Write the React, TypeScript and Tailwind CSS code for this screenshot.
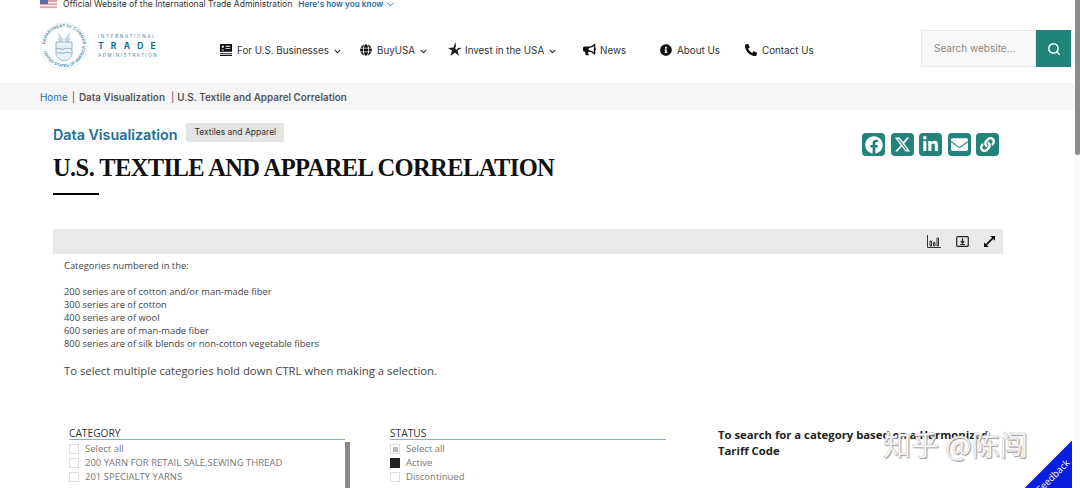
import React from 'react';
import { FaFacebook, FaLinkedinIn, FaEnvelope, FaLink, FaGlobe, FaBullhorn, FaInfoCircle, FaPhoneAlt, FaChevronDown } from 'react-icons/fa';
import { FaXTwitter } from 'react-icons/fa6';
import { Search, ChevronDown } from 'lucide-react';

const sans = 'font-["Inter","Noto_Sans",sans-serif]';
const segoe = 'font-["Open_Sans","Noto_Sans",sans-serif]';

const Flag = () => (
    <svg width="17" height="9" viewBox="0 0 17 9" className="shrink-0">
        <rect width="17" height="9" fill="#e8a0a0" />
        <rect y="2" width="17" height="1.4" fill="#f6f0f0" />
        <rect y="5" width="17" height="1.4" fill="#f6f0f0" />
        <rect y="8" width="17" height="1" fill="#f6f0f0" />
        <rect width="8" height="4" fill="#5a6fa5" />
    </svg>
);

const Seal = () => (
    <svg width="48" height="48" viewBox="0 0 48 48" className="shrink-0">
        <defs>
            <path id="sealTop" d="M5 24a19 19 0 0 1 38 0" />
            <path id="sealBottom" d="M3 24a21 21 0 0 0 42 0" />
        </defs>
        <circle cx="24" cy="24" r="23" fill="none" stroke="#9fc1d6" strokeWidth="0.6" strokeDasharray="1 1" />
        <text fontSize="4.2" fill="#5f8eaa" fontFamily="Liberation Sans" fontWeight="700">
            <textPath href="#sealTop" startOffset="3%">DEPARTMENT OF COMMERCE</textPath>
        </text>
        <text fontSize="4.2" fill="#5f8eaa" fontFamily="Liberation Sans" fontWeight="700">
            <textPath href="#sealBottom" startOffset="8%">UNITED STATES OF AMERICA</textPath>
        </text>
        <path d="M24 18 18 10l1 7-2-2 3 6zM24 18l6-8-1 7 2-2-3 6z" fill="#c5d6e2" />
        <path d="M16 20h16v12c0 4-5 6-8 7-3-1-8-3-8-7z" fill="#e9f1f6" stroke="#7fa6bf" strokeWidth="0.8" />
        <path d="M16 27c3-2 5 1 8 0s5-1 8 0M17 31c3-1 4 1 7 0s4-1 7 0" fill="none" stroke="#7fa6bf" strokeWidth="0.9" />
    </svg>
);

const BizIcon = () => (
    <svg width="12" height="12" viewBox="0 0 13 13" className="shrink-0">
        <path d="M0 0h13v8.5H0z" fill="#111" />
        <path d="M2 2h2v2H2zM6 2h5v1H6zM6 4.5h5v1H6zM2 6h2v1H2z" fill="#fff" />
        <path d="M0 10h13v1H0zM0 12h13v1H0z" fill="#111" />
    </svg>
);

const StarIcon = () => (
    <svg width="14" height="15" viewBox="0 0 14 15" className="shrink-0">
        <path d="M7.5 0 8 5.5l5.5.5-4 2.5L11 14 7 10.5 2.5 14l1.5-5.5L0 6l5.5-.5z" fill="#1a1a1a" />
        <path d="M7 5.5 14 3 8 8z" fill="#fff" />
    </svg>
);

const NavItem = ({ icon, label, caret, className = '' }: { icon: React.ReactNode; label: string; caret?: boolean; className?: string }) => (
    <div className={`flex items-center ${className}`}>
        <span className="w-[17px] -mt-[3px] flex text-[#111]">{icon}</span>
        <span className="text-[9.8px] text-[#333] whitespace-nowrap">{label}</span>
        {caret && <FaChevronDown className="ml-[5px] text-[#222]" size={7} />}
    </div>
);

const ShareBtn = ({ children }: { children: React.ReactNode }) => (
    <div className="w-[23px] h-[23px] rounded-[4px] bg-[#22837a] flex items-center justify-center text-white">{children}</div>
);

const SlicerRow = ({ label, box = 'empty' }: { label: string; box?: 'empty' | 'partial' | 'on' }) => (
    <div className="h-[14px] flex items-center gap-[6px]">
        <span className={`w-[10px] h-[10px] border flex items-center justify-center shrink-0 ${box === 'on' ? 'bg-[#222] border-[#222]' : 'bg-white border-[#ddd]'}`}>
            {box === 'partial' && <span className="w-[5px] h-[5px] bg-[#bbb]" />}
        </span>
        <span className="text-[9.5px] text-[#777] whitespace-nowrap">{label}</span>
    </div>
);

export default function App() {
    return (
        <div className={`relative w-[1080px] h-[488px] overflow-hidden bg-white ${sans}`}>
            {/* gov banner */}
            <div className="h-[9px] pl-[40px] flex items-center gap-[6px]">
                <Flag />
                <span className="text-[8.6px] text-[#333] whitespace-nowrap">Official Website of the International Trade Administration</span>
                <span className="text-[8.2px] font-semibold text-[#1f6f9f] whitespace-nowrap">Here's how you know</span>
                <ChevronDown size={11} className="-ml-[4px] text-[#1f6f9f]" />
            </div>

            {/* header */}
            <div className="h-[74px] pl-[40px] pr-[9px] flex items-center">
                <Seal />
                <div className="ml-[10px] w-[62px] flex flex-col items-start -mt-[1px]">
                    <span className="text-[4.5px] tracking-[1.75px] text-[#4d86a5] leading-[9px] whitespace-nowrap">INTERNATIONAL</span>
                    <span className="text-[8.5px] font-bold tracking-[7.2px] text-[#0f6d94] leading-[11px] whitespace-nowrap">TRADE</span>
                    <span className="text-[4.5px] tracking-[1.55px] text-[#4d86a5] leading-[8px] whitespace-nowrap">ADMINISTRATION</span>
                </div>
                <nav className="ml-[60px] mt-[10px] flex items-center">
                    <NavItem icon={<BizIcon />} label="For U.S. Businesses" caret className="w-[140px]" />
                    <NavItem icon={<FaGlobe size={12} />} label="BuyUSA" caret className="w-[88px]" />
                    <NavItem icon={<StarIcon />} label="Invest in the USA" caret className="w-[135px]" />
                    <NavItem icon={<FaBullhorn size={13} />} label="News" className="w-[77px]" />
                    <NavItem icon={<FaInfoCircle size={12} />} label="About Us" className="w-[85px]" />
                    <NavItem icon={<FaPhoneAlt size={12} />} label="Contact Us" />
                </nav>
                <div className="ml-auto flex h-[37px] mt-[5px]">
                    <div className="w-[115px] border border-[#e8e8e8] bg-[#f7f7f7] flex items-center pl-[12px] text-[10px] text-[#888] whitespace-nowrap">Search website...</div>
                    <div className="w-[35px] bg-[#22837a] flex items-center justify-center text-white"><Search size={14} strokeWidth={2.5} /></div>
                </div>
            </div>

            {/* breadcrumb */}
            <div className="h-[27px] bg-[#f6f6f6] pl-[40px] pt-[1px] flex items-center text-[9.9px] whitespace-nowrap">
                <span className="text-[#1f6f9f]">Home</span>
                <span className="mx-[4px] text-[#555]">|</span>
                <span className="font-semibold text-[#555]">Data Visualization</span>
                <span className="ml-[6px] mr-[3px] text-[#555]">|</span>
                <span className="font-semibold text-[#555]">U.S. Textile and Apparel Correlation</span>
            </div>

            {/* title area */}
            <div className="pl-[53px] pr-[81px] h-[119px] flex justify-between">
                <div className="pt-[13px]">
                    <div className="flex items-start">
                        <span className="mt-[1px] text-[14.3px] font-semibold text-[#1a6f98] leading-[22px] whitespace-nowrap">Data Visualization</span>
                        <span className="ml-[9px] h-[19px] px-[8px] rounded-[2px] bg-[#e4e4e4] text-[8.5px] text-[#333] flex items-center whitespace-nowrap">Textiles and Apparel</span>
                    </div>
                    <h1 className='mt-[6px] font-["Liberation_Serif",serif] font-bold text-[24.5px] tracking-[-0.6px] leading-[32px] text-[#111] whitespace-nowrap'>U.S. TEXTILE AND APPAREL CORRELATION</h1>
                    <div className="mt-[9px] w-[46px] h-[2px] bg-black" />
                </div>
                <div className="pt-[23px] flex gap-[5.5px]">
                    <ShareBtn><FaFacebook size={18} /></ShareBtn>
                    <ShareBtn><FaXTwitter size={17} /></ShareBtn>
                    <ShareBtn><FaLinkedinIn size={17} /></ShareBtn>
                    <ShareBtn><FaEnvelope size={17} /></ShareBtn>
                    <ShareBtn><FaLink size={15} /></ShareBtn>
                </div>
            </div>

            {/* report */}
            <div className="ml-[53px] w-[950px] h-[25px] bg-[#e9e9e9] flex items-center justify-end gap-[15px] pr-[8px]">
                <svg width="14" height="13" viewBox="0 0 14 13" fill="none" stroke="#333" strokeWidth="1">
                    <path d="M.5 0v12.5H14M3 11V6h1.5v5zM6.5 11V7.5H8V11zM10 11V3h1.5v8z" />
                </svg>
                <svg width="13" height="11" viewBox="0 0 14 12" fill="none" stroke="#222" strokeWidth="1.3">
                    <rect x=".7" y=".7" width="12.6" height="10.6" rx="1" />
                    <path d="M7 2.5v5M5 5.5l2 2.3 2-2.3M4.5 9.3h5" />
                </svg>
                <svg width="11" height="11" viewBox="0 0 13 13" fill="#111">
                    <path d="M7.5 0H13v5.5l-2-2L3.5 11l2 2H0V7.5l2 2L9.5 2z" />
                </svg>
            </div>

            <div className={`ml-[64px] pt-[5px] ${segoe}`}>
                <div className="text-[9.4px] leading-[13px] text-[#444]">
                    <p>Categories numbered in the:</p>
                    <p className="mt-[13px]">200 series are of cotton and/or man-made fiber</p>
                    <p>300 series are of cotton</p>
                    <p>400 series are of wool</p>
                    <p>600 series are of man-made fiber</p>
                    <p>800 series are of silk blends or non-cotton vegetable fibers</p>
                </div>
                <p className="mt-[13px] text-[11.3px] leading-[16px] text-[#444]">To select multiple categories hold down CTRL when making a selection.</p>

                <div className="mt-[48px] flex items-start">
                    <div className="ml-[5px] w-[276px]">
                        <div className="text-[10.2px] leading-[12px] text-[#333] border-b border-[#7fb8c8]">CATEGORY</div>
                        <div className="relative pt-[2px]">
                            <SlicerRow label="Select all" />
                            <SlicerRow label="200 YARN FOR RETAIL SALE,SEWING THREAD" />
                            <SlicerRow label="201 SPECIALTY YARNS" />
                            <div className="absolute -right-[5px] top-[2px] w-[5px] h-[60px] bg-[#8a8a8a]" />
                        </div>
                    </div>
                    <div className="ml-[45px] w-[276px]">
                        <div className="text-[10.2px] leading-[12px] text-[#333] border-b border-[#7fb8c8]">STATUS</div>
                        <div className="pt-[2px]">
                            <SlicerRow label="Select all" box="partial" />
                            <SlicerRow label="Active" box="on" />
                            <SlicerRow label="Discontinued" />
                        </div>
                    </div>
                    <p className="ml-[52px] w-[285px] text-[11.3px] leading-[16px] font-bold text-[#222]">To search for a category based on a Harmonized Tariff Code</p>
                </div>
            </div>

            {/* watermark */}
            <div className='absolute left-[883px] top-[426px] text-[28px] leading-[36px] text-white [-webkit-text-stroke:0.4px_#bbb] [text-shadow:1px_1px_1px_#999] font-["Noto_Sans_CJK_SC",sans-serif] whitespace-nowrap'>知乎 @陈闯</div>

            {/* feedback ribbon */}
            <div className="absolute left-[1024px] top-[440px] w-[48px] h-[48px] overflow-hidden">
                <div className="absolute left-[-18px] top-[19px] w-[120px] h-[60px] -rotate-45 bg-[#0a1ee0] text-white text-[9.5px] leading-[24px] text-center font-['Open_Sans',sans-serif]">Feedback</div>
            </div>

            {/* scrollbar */}
            <div className="absolute right-0 top-0 w-[6px] h-full bg-[#fbfbfb]">
                <div className="w-[5px] ml-auto h-[155px] rounded-b-[3px] bg-[#8c8c8c]" />
            </div>
        </div>
    );
}
